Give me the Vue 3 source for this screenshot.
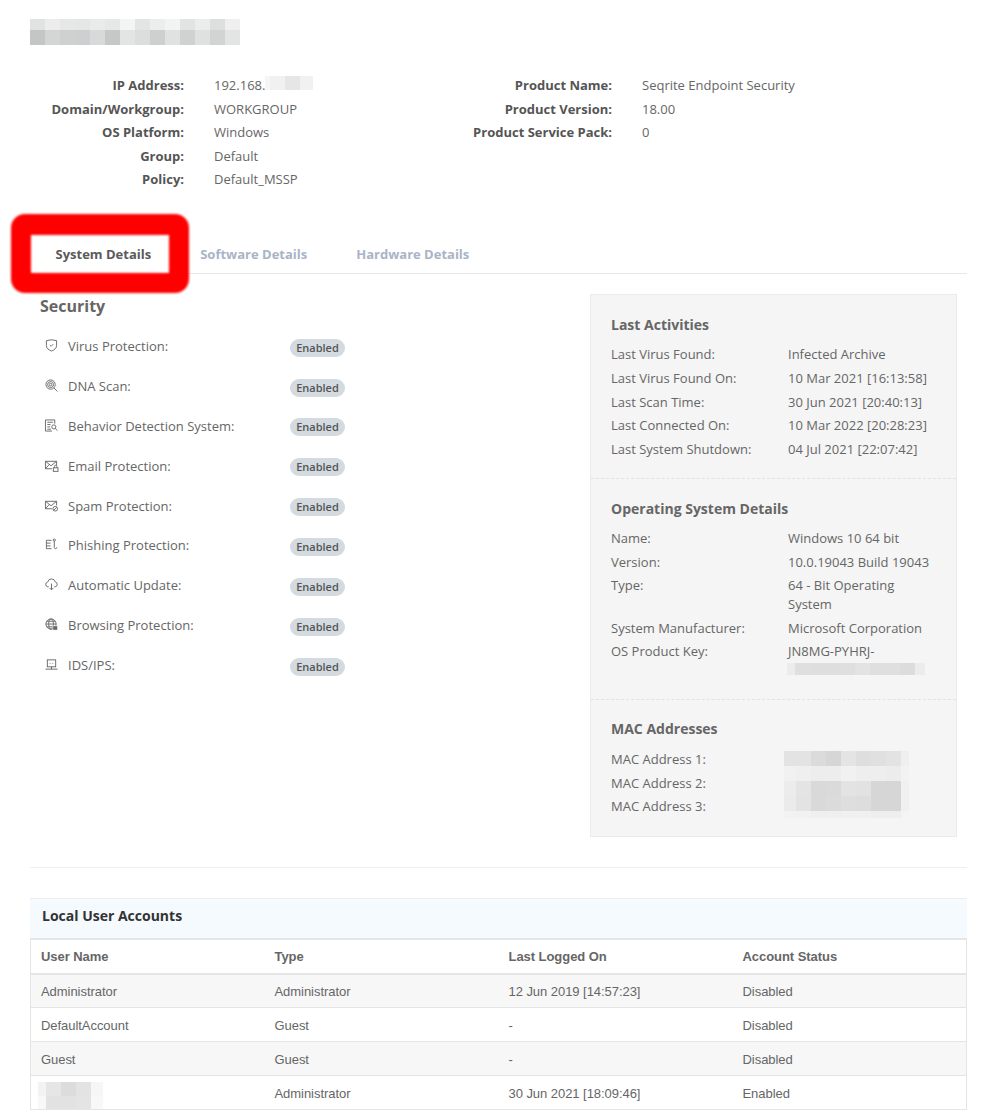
<script setup>
// Endpoint detail page. Redacted values are drawn as little mosaics:
// each block is a list of rows, each row a height and a list of [width, colour].
const c = (w, ...cols) => cols.map((col) => [w, col]);

const titleBlur = [
  { h: 11, cells: c(15, '#e1e3e3', '#ececec', '#e6e7e7', '#e5e6e6', '#e9eaea', '#e6e7e7', '#f3f4f4', '#e3e5e5', '#ededed', '#f2f3f3', '#e2e4e4', '#ebecec', '#dddfdf', '#efefef') },
  { h: 15, cells: c(15, '#c4c6c6', '#d4d6d6', '#cfd1d1', '#cdd0d0', '#d8dada', '#c6c8c8', '#e3e4e4', '#dcdede', '#ced0d0', '#e0e1e1', '#d0d2d2', '#dfe0e0', '#d2d4d4', '#e3e4e4') },
];
const ipBlur = [
  { h: 14, cells: [[5, '#f6f6f6'], [15, '#f1f1f1'], [15, '#e6e6e6'], [13, '#f1f1f1']] },
];
const keyBlur = [
  { h: 12, cells: [[8, '#ececec'], [15, '#dfdfdf'], [15, '#dedede'], [15, '#dedede'], [15, '#dfdfdf'], [15, '#e3e3e3'], [15, '#dfdfdf'], [15, '#dfdfdf'], [15, '#dcdcdc'], [10, '#ececec']] },
];
const macBlur = [
  { h: 15, cells: [[12, '#e3e3e3'], [15, '#e3e3e3'], [15, '#dbdbdb'], [15, '#d6d6d6'], [15, '#e4e4e4'], [15, '#dedede'], [15, '#e0e0e0'], [15, '#e3e3e3'], [8, '#efefef']] },
  { h: 15, cells: [[12, '#f1f1f1'], [15, '#efefef'], [15, '#ededed'], [15, '#ededed'], [15, '#f1f1f1'], [15, '#eeeeee'], [15, '#eeeeee'], [15, '#ececec'], [8, '#f2f2f2']] },
  { h: 15, cells: [[12, '#ececec'], [15, '#e4e4e4'], [15, '#d9d9d9'], [15, '#dadada'], [15, '#e3e3e3'], [15, '#e2e2e2'], [15, '#d6d6d6'], [15, '#d6d6d6'], [8, '#f0f0f0']] },
  { h: 15, cells: [[12, '#ebebeb'], [15, '#e3e3e3'], [15, '#d9d9d9'], [15, '#dbdbdb'], [15, '#dedede'], [15, '#dddddd'], [15, '#d6d6d6'], [15, '#d6d6d6'], [8, '#f0f0f0']] },
  { h: 7, cells: [[12, '#f2f2f2'], [15, '#f1f1f1'], [15, '#efefef'], [15, '#efefef'], [15, '#f0f0f0'], [15, '#f0f0f0'], [15, '#eeeeee'], [15, '#eeeeee'], [8, '#f4f4f4']] },
];
const userBlur = [
  { h: 14, cells: [[8, '#f3f3f3'], [15, '#e6e6e6'], [15, '#dcdcdc'], [15, '#e3e3e3'], [12, '#f6f6f6']] },
  { h: 13, cells: [[8, '#f8f8f8'], [15, '#e2e2e2'], [15, '#e2e2e2'], [15, '#e4e4e4'], [12, '#f8f8f8']] },
];

const infoLeft = [
  ['IP Address:', '192.168.'],
  ['Domain/Workgroup:', 'WORKGROUP'],
  ['OS Platform:', 'Windows'],
  ['Group:', 'Default'],
  ['Policy:', 'Default_MSSP'],
];
const infoRight = [
  ['Product Name:', 'Seqrite Endpoint Security'],
  ['Product Version:', '18.00'],
  ['Product Service Pack:', '0'],
];

const tabs = ['System Details', 'Software Details', 'Hardware Details'];

const security = [
  { name: 'Virus Protection:', icon: 'shield' },
  { name: 'DNA Scan:', icon: 'target' },
  { name: 'Behavior Detection System:', icon: 'doc' },
  { name: 'Email Protection:', icon: 'maillock' },
  { name: 'Spam Protection:', icon: 'mailban' },
  { name: 'Phishing Protection:', icon: 'hook' },
  { name: 'Automatic Update:', icon: 'cloud' },
  { name: 'Browsing Protection:', icon: 'globe' },
  { name: 'IDS/IPS:', icon: 'monitor' },
];

const activities = [
  ['Last Virus Found:', 'Infected Archive'],
  ['Last Virus Found On:', '10 Mar 2021 [16:13:58]'],
  ['Last Scan Time:', '30 Jun 2021 [20:40:13]'],
  ['Last Connected On:', '10 Mar 2022 [20:28:23]'],
  ['Last System Shutdown:', '04 Jul 2021 [22:07:42]'],
];
const osDetails = [
  ['Name:', 'Windows 10 64 bit'],
  ['Version:', '10.0.19043 Build 19043'],
  ['Type:', '64 - Bit Operating System'],
  ['System Manufacturer:', 'Microsoft Corporation'],
];
const macs = ['MAC Address 1:', 'MAC Address 2:', 'MAC Address 3:'];

const users = [
  ['Administrator', 'Administrator', '12 Jun 2019 [14:57:23]', 'Disabled'],
  ['DefaultAccount', 'Guest', '-', 'Disabled'],
  ['Guest', 'Guest', '-', 'Disabled'],
  ['', 'Administrator', '30 Jun 2021 [18:09:46]', 'Enabled'],
];
</script>

<template>
  <div class="page">
    <div class="mosaic title-blur">
      <div v-for="(r, i) in titleBlur" :key="i" class="m-row" :style="{ height: r.h + 'px' }">
        <i v-for="(m, j) in r.cells" :key="j" :style="{ width: m[0] + 'px', background: m[1] }"></i>
      </div>
    </div>

    <div class="info">
      <div class="info-col left">
        <div v-for="(row, i) in infoLeft" :key="row[0]" class="info-row">
          <span class="info-label">{{ row[0] }}</span>
          <span class="info-value">
            {{ row[1] }}
            <span v-if="i === 0" class="mosaic ip-blur">
              <span v-for="(r, k) in ipBlur" :key="k" class="m-row" :style="{ height: r.h + 'px' }">
                <i v-for="(m, j) in r.cells" :key="j" :style="{ width: m[0] + 'px', background: m[1] }"></i>
              </span>
            </span>
          </span>
        </div>
      </div>
      <div class="info-col">
        <div v-for="row in infoRight" :key="row[0]" class="info-row">
          <span class="info-label">{{ row[0] }}</span>
          <span class="info-value">{{ row[1] }}</span>
        </div>
      </div>
    </div>

    <div class="tabs">
      <a v-for="(t, i) in tabs" :key="t" class="tab" :class="{ active: i === 0 }">{{ t }}</a>
      <div class="highlight"></div>
    </div>

    <div class="main">
      <section class="security">
        <h2>Security</h2>
        <div v-for="s in security" :key="s.name" class="sec-row">
          <svg class="ico" viewBox="0 0 14 14" fill="none" stroke="#666" stroke-width="1">
            <template v-if="s.icon === 'shield'">
              <path d="M1.500 1.800 7 .8l5.500 1v5.400c0 2.800-2.600 4.600-5.500 5.800-2.900-1.200-5.500-3-5.500-5.800z" />
              <path d="m5.200 6.600 1.400 1.300 2.300-2.400" stroke-width=".9" />
            </template>
            <template v-else-if="s.icon === 'target'">
              <circle cx="6" cy="6" r="5" />
              <circle cx="6" cy="6" r="3.200" />
              <circle cx="6" cy="6" r="1.400" />
              <path d="m9.600 9.600 3.800 3.800" />
            </template>
            <template v-else-if="s.icon === 'doc'">
              <path d="M10.500 5V1h-10v12h7" />
              <path d="M2.500 3.500h6M2.500 6h3.500M2.500 8.500h3M2.500 11h4" />
              <circle cx="9.500" cy="8.500" r="2.200" />
              <path d="m11 10.200 2.400 2.400" />
            </template>
            <template v-else-if="s.icon === 'maillock'">
              <path d="M7.500 10.500H.5v-8h12v4.500" />
              <path d="m.5 2.500 6 4.800 6-4.800M.5 10.500 4.500 6" />
              <rect x="9" y="9.500" width="5" height="3.800" />
              <path d="M10.200 9.500V8a1.300 1.300 0 0 1 2.600 0v1.500" />
            </template>
            <template v-else-if="s.icon === 'mailban'">
              <path d="M7.500 10.500H.5v-8h12v4.500" />
              <path d="m.5 2.500 6 4.800 6-4.800M.5 10.500 4.500 6" />
              <circle cx="11" cy="10.500" r="2.500" />
              <path d="m9.300 12.200 3.400-3.400" />
            </template>
            <template v-else-if="s.icon === 'hook'">
              <path d="M7 2.500H1.500v9H7M1.500 5.500H6M1.500 8.500H6" />
              <circle cx="10" cy="2.300" r="1.200" />
              <path d="M10 3.500v6.700c0 1.800 2.800 1.800 2.800-.2" />
            </template>
            <template v-else-if="s.icon === 'cloud'">
              <path d="M4 9.500H3a2.700 2.700 0 0 1 0-5.300 4.100 4.100 0 0 1 8 0 2.700 2.700 0 0 1 0 5.300h-1" />
              <path d="M7 6v6.800M5 10.800l2 2 2-2" />
            </template>
            <template v-else-if="s.icon === 'globe'">
              <circle cx="6.500" cy="6.500" r="5.500" />
              <ellipse cx="6.500" cy="6.500" rx="2.500" ry="5.500" />
              <path d="M1 6.500h11M2 3.500h9M2 9.500h9" />
              <rect x="8.500" y="8.500" width="5" height="4.500" fill="#666" stroke="#fff" stroke-width=".6" />
            </template>
            <template v-else>
              <rect x="2.500" y="2" width="9" height="7.500" />
              <path d="M.5 12h13M7 9.500V12M5 5.800h.9M8 5.800h.9" />
            </template>
          </svg>
          <span class="sec-name">{{ s.name }}</span>
          <span class="badge">Enabled</span>
        </div>
      </section>

      <aside class="panel">
        <div class="panel-sec">
          <h3>Last Activities</h3>
          <div v-for="row in activities" :key="row[0]" class="p-row">
            <span class="p-label">{{ row[0] }}</span>
            <span class="p-value">{{ row[1] }}</span>
          </div>
        </div>
        <div class="panel-sec">
          <h3>Operating System Details</h3>
          <div v-for="row in osDetails" :key="row[0]" class="p-row">
            <span class="p-label">{{ row[0] }}</span>
            <span class="p-value">{{ row[1] }}</span>
          </div>
          <div class="p-row">
            <span class="p-label">OS Product Key:</span>
            <span class="p-value">
              JN8MG-PYHRJ-
              <span class="mosaic key-blur">
                <span v-for="(r, k) in keyBlur" :key="k" class="m-row" :style="{ height: r.h + 'px' }">
                  <i v-for="(m, j) in r.cells" :key="j" :style="{ width: m[0] + 'px', background: m[1] }"></i>
                </span>
              </span>
            </span>
          </div>
        </div>
        <div class="panel-sec macs">
          <h3>MAC Addresses</h3>
          <div v-for="m in macs" :key="m" class="p-row">
            <span class="p-label">{{ m }}</span>
            <span class="p-value"></span>
          </div>
          <div class="mosaic mac-blur">
            <div v-for="(r, k) in macBlur" :key="k" class="m-row" :style="{ height: r.h + 'px' }">
              <i v-for="(m, j) in r.cells" :key="j" :style="{ width: m[0] + 'px', background: m[1] }"></i>
            </div>
          </div>
        </div>
      </aside>
    </div>

    <hr class="rule" />

    <div class="accounts">
      <div class="acc-title">Local User Accounts</div>
      <table>
        <thead>
          <tr>
            <th>User Name</th>
            <th>Type</th>
            <th>Last Logged On</th>
            <th>Account Status</th>
          </tr>
        </thead>
        <tbody>
          <tr v-for="(u, i) in users" :key="i">
            <td v-for="(val, j) in u" :key="j">
              <template v-if="val">{{ val }}</template>
              <div v-else class="mosaic user-blur">
                <div v-for="(r, k) in userBlur" :key="k" class="m-row" :style="{ height: r.h + 'px' }">
                  <i v-for="(m, n) in r.cells" :key="n" :style="{ width: m[0] + 'px', background: m[1] }"></i>
                </div>
              </div>
            </td>
          </tr>
        </tbody>
      </table>
    </div>
  </div>
</template>

<style>
body {
  background: #fff;
}
</style>

<style scoped>
.page {
  width: 994px;
  box-sizing: border-box;
  padding: 19px 27px 0 30px;
  font-family: "Open Sans", "Liberation Sans", sans-serif;
  font-size: 13px;
  color: #666;
}
.mosaic {
  display: block;
}
.m-row {
  display: flex;
}
.m-row i {
  display: block;
  flex: none;
}

.info {
  display: flex;
  margin-top: 29px;
}
.info-col.left {
  width: 442px;
}
.info-row {
  display: flex;
  line-height: 23.6px;
}
.info-label {
  font-weight: 700;
  color: #555;
  text-align: right;
  margin-right: 30px;
}
.left .info-label {
  width: 154px;
}
.info-col:not(.left) .info-label {
  width: 140px;
}
.info-value {
  position: relative;
}
.ip-blur {
  position: absolute;
  left: 51px;
  top: 2px;
}

.tabs {
  position: relative;
  display: flex;
  height: 38px;
  margin-top: 43px;
  padding-left: 1px;
  border-bottom: 1px solid #e8e8e8;
}
.tab {
  padding: 0 24.5px;
  line-height: 38px;
  font-weight: 700;
  font-size: 13px;
  color: #a9b4c6;
  white-space: nowrap;
}
.tab.active {
  color: #5a5a5a;
}
.highlight {
  position: absolute;
  left: -19px;
  top: -21px;
  width: 178px;
  height: 79px;
  box-sizing: border-box;
  border: 20px solid #f00;
  border-top-width: 21px;
  border-radius: 14px;
  filter: blur(1px);
  pointer-events: none;
}

.main {
  display: flex;
  align-items: flex-start;
}
.security {
  width: 560px;
  flex: none;
  padding-left: 10px;
  box-sizing: border-box;
}
.security h2 {
  margin: 21px 0 19px;
  font-size: 16px;
  line-height: 22px;
  font-weight: 700;
  color: #666;
}
.sec-row {
  display: flex;
  align-items: flex-start;
  height: 39.9px;
  padding-left: 5px;
  line-height: 20px;
}
.ico {
  width: 13px;
  height: 13px;
  margin-top: 3px;
  flex: none;
  overflow: visible;
}
.sec-name {
  width: 222px;
  margin-left: 10px;
  flex: none;
}
.badge {
  width: 55px;
  height: 18px;
  margin-top: 2.7px;
  border-radius: 9px;
  background: #d3dae0;
  color: #555;
  font-size: 11px;
  font-weight: 600;
  line-height: 18px;
  text-align: center;
}

.panel {
  width: 367px;
  flex: none;
  margin-top: 20px;
  box-sizing: border-box;
  background: #f5f5f5;
  border: 1px solid #ebebeb;
}
.panel-sec {
  position: relative;
  padding: 20px 20px 17.3px;
  border-bottom: 1px dashed #e2e2e2;
}
.panel-sec:nth-child(n + 2) {
  padding-top: 19.5px;
}
.panel-sec:last-child {
  border-bottom: 0;
  padding-bottom: 17px;
}
.panel-sec h3 {
  margin: 0 0 8.2px;
  font-size: 14px;
  line-height: 20px;
  font-weight: 700;
  color: #666;
}
.panel-sec:nth-child(2) h3 {
  margin-bottom: 7.7px;
}
.panel-sec:nth-child(3) h3 {
  margin-bottom: 8.5px;
}
.p-row {
  display: flex;
  padding: 2.3px 0;
  line-height: 19px;
}
.p-label {
  width: 177px;
  flex: none;
}
.p-value {
  flex: 1;
  min-width: 0;
}
.key-blur {
  margin: 2px 0 4px -1px;
  width: 140px;
}
.mac-blur {
  position: absolute;
  left: 193px;
  top: 51px;
}

.rule {
  margin: 30px 0 0;
  border: 0;
  border-top: 1px solid #eee;
}
.accounts {
  margin-top: 30px;
}
.acc-title {
  box-sizing: border-box;
  height: 40px;
  padding-left: 12px;
  border-top: 1px solid #eeeeee;
  background: #f5fafe;
  color: #333;
  font-size: 14px;
  font-weight: 700;
  line-height: 34px;
}
table {
  width: 100%;
  table-layout: fixed;
  border-collapse: collapse;
  font-family: "Liberation Sans", Arial, sans-serif;
  font-size: 13px;
  letter-spacing: -.05px;
  color: #666;
  border-left: 1px solid #e5e5e5;
  border-right: 1px solid #e5e5e5;
  border-top: 2px solid #e5e5e5;
}
th {
  height: 35px;
  padding: 0 10px;
  text-align: left;
  font-weight: 700;
  box-sizing: border-box;
  border-bottom: 2px solid #e5e5e5;
}
td {
  height: 34px;
  padding: 1px 10px 0;
  box-sizing: border-box;
  border-bottom: 1px solid #e5e5e5;
  position: relative;
}
tbody tr:nth-child(odd) {
  background: #f7f7f7;
}
.user-blur {
  position: absolute;
  left: 7px;
  top: 6px;
}
</style>
